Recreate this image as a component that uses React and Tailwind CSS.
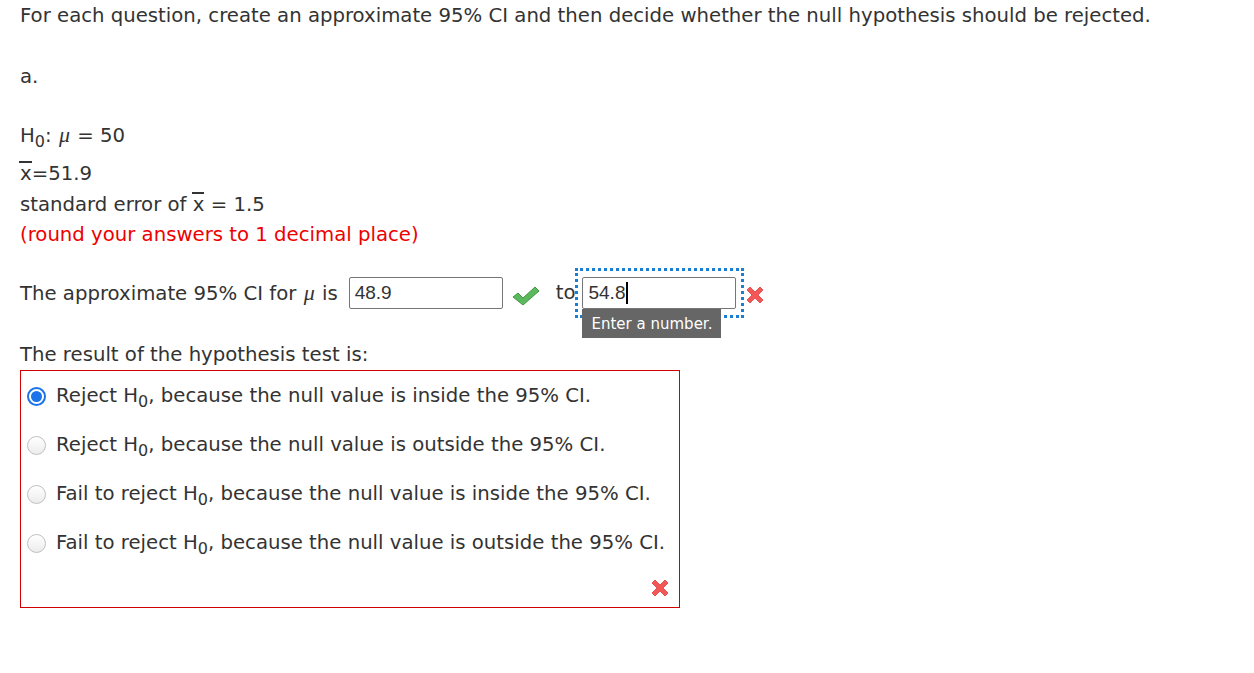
import React from 'react';

const font = { fontFamily: '"DejaVu Sans", Verdana, sans-serif' };

function Mu() {
  return <span className="italic font-['Liberation_Serif',serif] text-[22px] mx-[1px]">μ</span>;
}

function Xbar() {
  return (
    <span className="relative inline-block">
      <span className="absolute -left-[1px] right-0 -top-[1px] h-[1.5px] bg-[#333]" />
      <span>x</span>
    </span>
  );
}

function H0() {
  return (
    <span>
      H<span className="text-[16px] relative top-[5px]">0</span>
    </span>
  );
}

function Check() {
  return (
    <svg width="30" height="22" viewBox="0 0 30 22">
      <path d="M2 12 L7 8 L12 13 L24 2 L28 6 L12 20 Z" fill="#5cb85c" stroke="#3f9a3f" strokeWidth="1" />
    </svg>
  );
}

function RedX({ size = 22 }) {
  return (
    <svg width={size} height={size} viewBox="0 0 22 22">
      <path d="M3 6 L6 3 L11 8 L16 3 L19 6 L14 11 L19 16 L16 19 L11 14 L6 19 L3 16 L8 11 Z" fill="#f25858" stroke="#e23c3c" strokeWidth="0.8" strokeLinejoin="round" />
    </svg>
  );
}

function Radio({ checked }) {
  if (checked) {
    return (
      <span className="w-[19px] h-[19px] rounded-full border-[2px] border-[#1a73e8] bg-white flex items-center justify-center shrink-0">
        <span className="w-[11px] h-[11px] rounded-full bg-[#1a73e8]" />
      </span>
    );
  }
  return <span className="w-[19px] h-[19px] rounded-full border border-[#c0c0c0] bg-gradient-to-b from-white to-[#ececec] shrink-0" />;
}

const options = [
  ['Reject ', ', because the null value is inside the 95% CI.', true],
  ['Reject ', ', because the null value is outside the 95% CI.', false],
  ['Fail to reject ', ', because the null value is inside the 95% CI.', false],
  ['Fail to reject ', ', because the null value is outside the 95% CI.', false],
];

export default function App() {
  return (
    <div className="w-[1254px] h-[673px] bg-white text-[#333] text-[19.7px] leading-[24px] px-[20px] pt-[4px]" style={font}>
      <p>For each question, create an approximate 95% CI and then decide whether the null hypothesis should be rejected.</p>
      <p className="mt-[37px]">a.</p>
      <div className="mt-[34px] flex flex-col">
        <p><H0 />: <Mu /> = 50</p>
        <p className="mt-[13px]"><Xbar />=51.9</p>
        <p className="mt-[7px]">standard error of <Xbar /> = 1.5</p>
        <p className="mt-[6px] text-[#ee0000]">(round your answers to 1 decimal place)</p>
      </div>
      <div className="mt-[30px] flex items-center h-[32px]">
        <span>The approximate 95% CI for <Mu /> is</span>
        <div className="ml-[11px] w-[154px] h-[32px] border border-[#767676] rounded-[2px] px-[5px] flex items-center font-['Liberation_Sans',Arial,sans-serif] text-[19px]">48.9</div>
        <span className="ml-[8px] mt-[6px]"><Check /></span>
        <span className="ml-[15px]">to</span>
        <div className="relative ml-[7px]">
          <div className="absolute -left-[7px] -top-[9px] w-[169px] h-[50px] border-[3px] border-dotted border-[#1a7fd4]" />
          <div className="relative w-[154px] h-[32px] border border-[#767676] rounded-[2px] px-[5px] flex items-center font-['Liberation_Sans',Arial,sans-serif] text-[19px] bg-white">
            54.8<span className="w-[2px] h-[22px] bg-black ml-[1px]" />
          </div>
          <div className="absolute left-0 top-[32px] w-[139px] h-[29px] bg-[#666] text-white text-[15px] flex items-center justify-center">Enter a number.</div>
          <span className="absolute left-[162px] top-[7px]"><RedX /></span>
        </div>
      </div>
      <p className="mt-[34px]">The result of the hypothesis test is:</p>
      <div className="relative mt-[3px] w-[660px] h-[238px] border border-[#d00000] pt-[1px]">
        {options.map(([a, b, c], i) => (
          <div key={i} className="flex items-center h-[49px] pl-[6px] gap-[10px]">
            <Radio checked={c} />
            <span className="whitespace-nowrap">{a}<H0 />{b}</span>
          </div>
        ))}
        <span className="absolute right-[8px] bottom-[8px]"><RedX /></span>
      </div>
    </div>
  );
}
